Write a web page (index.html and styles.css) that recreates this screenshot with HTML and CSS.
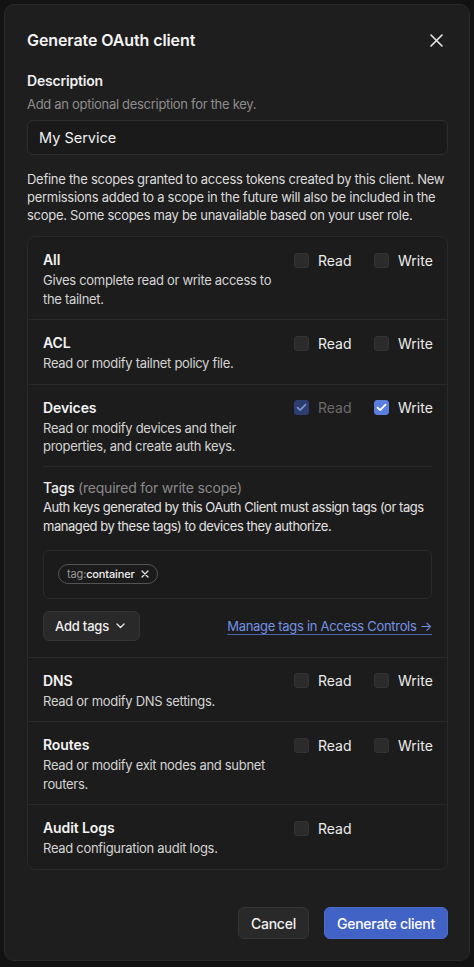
FILE: index.html
```html
<!DOCTYPE html>
<html lang="en">
<head>
<meta charset="utf-8">
<title>Generate OAuth client</title>
<link rel="stylesheet" href="styles.css">
</head>
<body>
<div class="modal">
  <header class="modal-header">
    <h1 class="modal-title">Generate OAuth client</h1>
    <button class="close-btn" aria-label="Close">
      <svg width="13" height="13" viewBox="0 0 13 13"><path d="M1 1L12 12M12 1L1 12" stroke="#e8e8e8" stroke-width="1.6" stroke-linecap="round"/></svg>
    </button>
  </header>

  <label class="field-label">Description</label>
  <p class="field-help">Add an optional description for the key.</p>
  <div class="text-input">My Service</div>

  <p class="intro">Define the scopes granted to access tokens created by this client. New permissions added to a scope in the future will also be included in the scope. Some scopes may be unavailable based on your user role.</p>

  <div class="scopes">
    <div class="scope">
      <div class="scope-main">
        <div class="scope-info">
          <div class="scope-title">All</div>
          <div class="scope-desc">Gives complete read or write access to the tailnet.</div>
        </div>
        <div class="perms">
          <label class="perm"><span class="cb"></span>Read</label>
          <label class="perm"><span class="cb"></span>Write</label>
        </div>
      </div>
    </div>

    <div class="scope">
      <div class="scope-main">
        <div class="scope-info">
          <div class="scope-title">ACL</div>
          <div class="scope-desc">Read or modify tailnet policy file.</div>
        </div>
        <div class="perms">
          <label class="perm"><span class="cb"></span>Read</label>
          <label class="perm"><span class="cb"></span>Write</label>
        </div>
      </div>
    </div>

    <div class="scope scope-devices">
      <div class="scope-main">
        <div class="scope-info">
          <div class="scope-title">Devices</div>
          <div class="scope-desc">Read or modify devices and their properties, and create auth keys.</div>
        </div>
        <div class="perms">
          <label class="perm perm-disabled"><span class="cb cb-checked-disabled"><svg width="11" height="9" viewBox="0 0 11 9"><path d="M1.5 4.6L4.2 7.2L9.5 1.6" fill="none" stroke="#7f93c8" stroke-width="1.7" stroke-linecap="round" stroke-linejoin="round"/></svg></span>Read</label>
          <label class="perm"><span class="cb cb-checked"><svg width="11" height="9" viewBox="0 0 11 9"><path d="M1.5 4.6L4.2 7.2L9.5 1.6" fill="none" stroke="#ffffff" stroke-width="1.8" stroke-linecap="round" stroke-linejoin="round"/></svg></span>Write</label>
        </div>
      </div>
      <div class="tags">
        <div class="tags-label">Tags <span class="muted">(required for write scope)</span></div>
        <p class="tags-desc">Auth keys generated by this OAuth Client must assign tags (or tags managed by these tags) to devices they authorize.</p>
        <div class="tag-box">
          <span class="chip"><span class="chip-prefix">tag:</span><span class="chip-name">container</span><svg class="chip-x" width="8" height="8" viewBox="0 0 8 8"><path d="M1 1L7 7M7 1L1 7" stroke="#e6e6e6" stroke-width="1.3" stroke-linecap="round"/></svg></span>
        </div>
        <div class="tags-actions">
          <button class="btn btn-secondary btn-add">Add tags <svg width="9" height="6" viewBox="0 0 9 6"><path d="M1 1L4.5 4.5L8 1" fill="none" stroke="#e6e6e6" stroke-width="1.4" stroke-linecap="round" stroke-linejoin="round"/></svg></button>
          <a class="link" href="#">Manage tags in Access Controls →</a>
        </div>
      </div>
    </div>

    <div class="scope">
      <div class="scope-main">
        <div class="scope-info">
          <div class="scope-title">DNS</div>
          <div class="scope-desc">Read or modify DNS settings.</div>
        </div>
        <div class="perms">
          <label class="perm"><span class="cb"></span>Read</label>
          <label class="perm"><span class="cb"></span>Write</label>
        </div>
      </div>
    </div>

    <div class="scope">
      <div class="scope-main">
        <div class="scope-info">
          <div class="scope-title">Routes</div>
          <div class="scope-desc">Read or modify exit nodes and subnet routers.</div>
        </div>
        <div class="perms">
          <label class="perm"><span class="cb"></span>Read</label>
          <label class="perm"><span class="cb"></span>Write</label>
        </div>
      </div>
    </div>

    <div class="scope">
      <div class="scope-main">
        <div class="scope-info">
          <div class="scope-title">Audit Logs</div>
          <div class="scope-desc">Read configuration audit logs.</div>
        </div>
        <div class="perms">
          <label class="perm"><span class="cb"></span>Read</label>
        </div>
      </div>
    </div>
  </div>

  <footer class="modal-footer">
    <button class="btn btn-secondary btn-lg">Cancel</button>
    <button class="btn btn-primary btn-lg">Generate client</button>
  </footer>
</div>
</body>
</html>
```

FILE: styles.css
```css
* { box-sizing: border-box; }

html, body {
  margin: 0;
  padding: 0;
  background: #121212;
}

body {
  font-family: Inter, "Noto Sans", "Liberation Sans", sans-serif;
  color: #ededed;
  -webkit-font-smoothing: antialiased;
}

.modal {
  margin: 4px;
  width: 466px;
  height: 957px;
  background: #1f1e1e;
  border: 1px solid #2a2929;
  border-radius: 10px;
  padding: 23px 21px 21px 22px;
  display: flex;
  flex-direction: column;
}

.modal-header {
  display: flex;
  align-items: center;
  justify-content: space-between;
  height: 24px;
}

.modal-title {
  margin: 0;
  font-size: 16px;
  line-height: 24px;
  font-weight: 600;
  letter-spacing: -0.1px;
  color: #f4f4f4;
}

.close-btn {
  width: 24px;
  height: 24px;
  padding: 0;
  border: 0;
  background: transparent;
  display: flex;
  align-items: center;
  justify-content: center;
}

.field-label {
  display: block;
  margin-top: 19px;
  font-size: 14px;
  line-height: 20px;
  font-weight: 600;
  letter-spacing: -0.2px;
  color: #efefef;
}

.field-help {
  margin: 4px 0 0;
  font-size: 13px;
  line-height: 18px;
  letter-spacing: -0.3px;
  color: #8e8d8d;
}

.text-input {
  margin-top: 7px;
  height: 35px;
  border: 1px solid #2f2e2e;
  border-radius: 6px;
  background: #1b1a1a;
  padding: 0 11px;
  display: flex;
  align-items: center;
  font-size: 14.5px;
  color: #f1f1f1;
}

.intro {
  margin: 15px 0 0;
  font-size: 13px;
  line-height: 18px;
  letter-spacing: -0.28px;
  color: #dcdcdc;
}

.scopes {
  margin-top: 12px;
  border: 1px solid #2a2929;
  border-radius: 8px;
  background: #1d1c1c;
}

.scope {
  padding: 12px 15px 11px;
  border-top: 1px solid #2a2929;
}

.scope:first-child { border-top: 0; }

.scope-main {
  display: flex;
  gap: 14px;
}

.scope-info {
  flex: 1;
  min-width: 0;
}

.scope-title {
  font-size: 14px;
  line-height: 22px;
  font-weight: 600;
  letter-spacing: -0.1px;
  color: #f3f3f3;
}

.scope-desc {
  font-size: 13px;
  line-height: 18.5px;
  letter-spacing: -0.3px;
  color: #d4d4d4;
}

.perms {
  width: 138px;
  flex: none;
  display: grid;
  grid-template-columns: 80px 58px;
  align-content: start;
}

.perm {
  display: flex;
  align-items: center;
  gap: 9px;
  height: 22px;
  font-size: 14px;
  color: #ececec;
}

.perm-disabled { color: #6c6b6b; }

.cb {
  width: 15px;
  height: 15px;
  flex: none;
  border-radius: 3px;
  background: #2c2b2b;
  border: 1px solid #343333;
  display: flex;
  align-items: center;
  justify-content: center;
}

.cb-checked {
  background: #5a7ee0;
  border-color: #5a7ee0;
}

.cb-checked-disabled {
  background: #2c3d72;
  border-color: #2c3d72;
}

.scope-devices { padding-bottom: 16px; }

.tags {
  margin-top: 10px;
  border-top: 1px solid #2a2929;
  padding-top: 10px;
}

.tags-label {
  font-size: 14px;
  line-height: 21px;
  font-weight: 500;
  letter-spacing: -0.2px;
  color: #f0f0f0;
}

.muted {
  font-weight: 400;
  color: #8a8989;
}

.tags-desc {
  margin: 0;
  font-size: 13px;
  line-height: 19px;
  letter-spacing: -0.45px;
  color: #e2e2e2;
}

.tag-box {
  margin-top: 14px;
  height: 49px;
  border: 1px solid #2a2929;
  border-radius: 6px;
  background: #1c1b1b;
  padding: 0 14px;
  display: flex;
  align-items: center;
}

.chip {
  display: inline-flex;
  align-items: center;
  height: 20px;
  padding: 0 8px;
  border: 1px solid #545353;
  border-radius: 10px;
  font-size: 11px;
  letter-spacing: -0.15px;
}

.chip-prefix { color: #9a9999; }
.chip-name { color: #f0f0f0; font-weight: 500; }
.chip-x { margin-left: 6px; }

.tags-actions {
  margin-top: 12px;
  display: flex;
  align-items: center;
  justify-content: space-between;
}

.btn {
  font-family: inherit;
  border-radius: 6px;
  display: inline-flex;
  align-items: center;
  justify-content: center;
  cursor: pointer;
  white-space: nowrap;
}

.btn-secondary {
  background: #2a2929;
  border: 1px solid #353434;
  color: #f0f0f0;
}

.btn-add {
  height: 30px;
  gap: 7px;
  font-size: 13px;
  font-weight: 500;
  letter-spacing: -0.2px;
  padding: 0 14px 0 11px;
}

.link {
  font-size: 13px;
  letter-spacing: -0.3px;
  color: #7391e4;
  text-decoration: underline;
  text-decoration-color: #4b66b3;
  text-underline-offset: 3px;
}

.modal-footer {
  margin-top: auto;
  display: flex;
  justify-content: flex-end;
  gap: 15px;
}

.btn-lg {
  height: 32px;
  font-size: 14px;
  font-weight: 500;
  letter-spacing: -0.25px;
  padding: 0 12px;
}

.btn-primary {
  background: #4263c6;
  border: 1px solid #4a6bcd;
  color: #ffffff;
}
```
